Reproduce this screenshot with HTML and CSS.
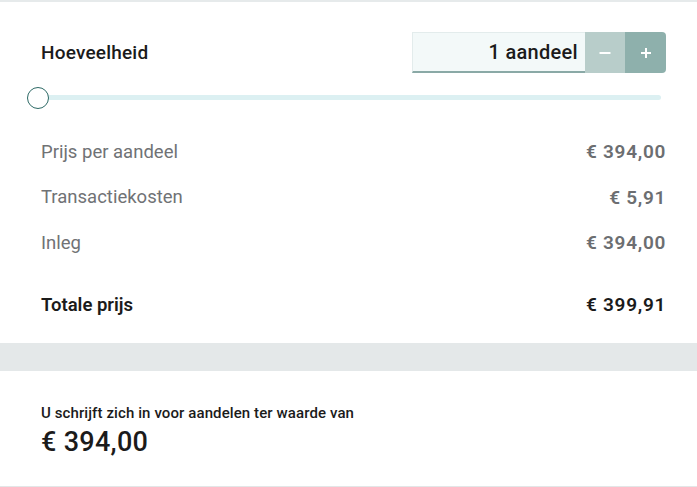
FILE: index.html
```html
<!DOCTYPE html>
<html lang="nl">
<head>
<meta charset="utf-8">
<title>Hoeveelheid</title>
<link rel="stylesheet" href="styles.css">
</head>
<body>
<div class="card">
  <section class="calc">
    <div class="qty-row">
      <span class="qty-label">Hoeveelheid</span>
      <div class="stepper">
        <div class="qty-input">1 aandeel</div>
        <button class="step step-minus" type="button">
          <svg width="12" height="12" viewBox="0 0 12 12"><path d="M0.5 6h11" stroke="#fff" stroke-width="2"/></svg>
        </button>
        <button class="step step-plus" type="button">
          <svg width="12" height="12" viewBox="0 0 12 12"><path d="M1 6h10M6 1v10" stroke="#fff" stroke-width="2"/></svg>
        </button>
      </div>
    </div>
    <div class="slider">
      <div class="track"></div>
      <div class="thumb"></div>
    </div>
    <div class="rows">
      <div class="row"><span>Prijs per aandeel</span><span class="val">€ 394,00</span></div>
      <div class="row"><span>Transactiekosten</span><span class="val">€ 5,91</span></div>
      <div class="row"><span>Inleg</span><span class="val">€ 394,00</span></div>
      <div class="row total"><span>Totale prijs</span><span class="val">€ 399,91</span></div>
    </div>
  </section>
  <div class="band"></div>
  <section class="summary">
    <p class="summary-text">U schrijft zich in voor aandelen ter waarde van</p>
    <p class="summary-amount">€ 394,00</p>
  </section>
</div>
</body>
</html>
```

FILE: styles.css
```css
* { box-sizing: border-box; }
html, body { margin: 0; padding: 0; background: #fff; }
body {
  font-family: Roboto, "Liberation Sans", Arial, sans-serif;
  color: #1b1b1b;
  width: 697px;
  height: 487px;
  overflow: hidden;
}
.card {
  border-top: 2px solid #e6eaeb;
  border-bottom: 1px solid #e3e6e7;
}
.calc {
  padding: 30px 31px 15px 41px;
}
.qty-row {
  display: flex;
  align-items: center;
  justify-content: space-between;
  height: 41px;
}
.qty-label {
  font-size: 19px;
  font-weight: 500;
  letter-spacing: 0.2px;
  color: #1b1b1b;
}
.stepper {
  display: flex;
  height: 41px;
}
.qty-input {
  width: 173px;
  height: 41px;
  background: #f3f9f9;
  border: 1px solid #e3ecec;
  border-bottom: 2px solid #8aa9a6;
  border-right: none;
  font-size: 20px;
  font-weight: 500;
  letter-spacing: 0.3px;
  text-align: right;
  padding: 7px 7px 0 0;
  color: #1b1b1b;
}
.step {
  width: 40px;
  height: 41px;
  border: none;
  padding: 0;
  display: flex;
  align-items: center;
  justify-content: center;
  cursor: pointer;
}
.step-minus { background: #b8cdca; }
.step-plus { background: #8eb0ac; width: 41px; border-radius: 0 4px 4px 0; }
.slider {
  position: relative;
  height: 22px;
  margin: 14px 5px 0 -14px;
  display: flex;
  align-items: center;
}
.track {
  height: 5px;
  width: 100%;
  background: #dcf0f2;
  border-radius: 3px;
  margin-top: -2px;
}
.thumb {
  position: absolute;
  left: 0;
  top: 0;
  width: 22px;
  height: 22px;
  border-radius: 50%;
  border: 1.5px solid #2e6a66;
  background: #fff;
}
.rows {
  margin-top: 20px;
}
.row {
  display: flex;
  justify-content: space-between;
  align-items: center;
  height: 45.5px;
  font-size: 18.5px;
  color: #707275;
}
.row .val {
  font-size: 19px;
  font-weight: 600;
  letter-spacing: 0.7px;
  color: #6c6e71;
}
.row.total {
  margin-top: 16px;
  height: 46px;
  color: #1b1b1b;
  font-weight: 600;
}
.row.total .val { color: #1b1b1b; }
.band {
  height: 28px;
  background: #e4e8e9;
}
.summary {
  padding: 32px 41px 28px 41px;
  height: 115px;
}
.summary-text {
  margin: 0;
  font-size: 15px;
  font-weight: 500;
  letter-spacing: 0.1px;
  line-height: 20px;
}
.summary-amount {
  margin: 3px 0 0;
  font-size: 27px;
  font-weight: 500;
  letter-spacing: 0.3px;
  line-height: 32px;
}
```
